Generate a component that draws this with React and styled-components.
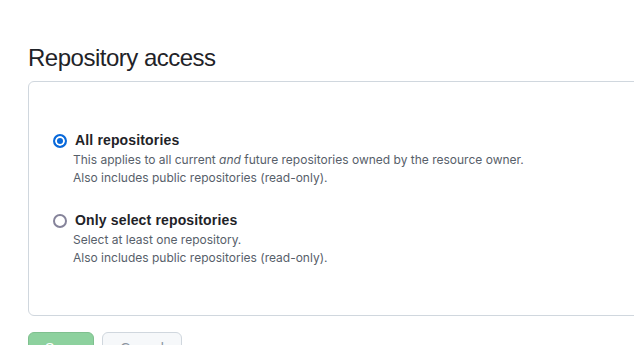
import * as React from 'react';
import styled, { createGlobalStyle } from 'styled-components';

const GlobalStyle = createGlobalStyle`
  html, body {
    margin: 0;
    padding: 0;
    background: #ffffff;
    overflow: hidden;
  }
  body {
    font-family: "Liberation Sans", Arial, sans-serif;
    color: #1f2328;
  }
`;

const Page = styled.div`
  padding: 40px 0 0 28px;
  width: 680px;
`;

const Heading = styled.h2`
  margin: 0 0 5px;
  font-size: 24px;
  font-weight: 400;
  line-height: 36px;
  letter-spacing: -0.5px;
  color: #1f2328;
`;

const Box = styled.div`
  border: 1px solid #d0d7de;
  border-radius: 6px;
  padding: 48px 24px 48px;
  display: flex;
  flex-direction: column;
  gap: 23px;
`;

const Option = styled.div`
  display: flex;
  flex-direction: column;
`;

const OptionLabel = styled.label`
  display: flex;
  align-items: center;
  gap: 8px;
  font-size: 14px;
  font-weight: 700;
  line-height: 21px;
  letter-spacing: 0.15px;
  color: #1f2328;
  cursor: pointer;
`;

const Radio = styled.span`
  box-sizing: border-box;
  width: 14px;
  height: 14px;
  border-radius: 50%;
  flex-shrink: 0;
  border: 2px solid ${props => (props.checked ? '#0969da' : '#85839a')};
  background: ${props => (props.checked ? '#0969da' : '#ffffff')};
  box-shadow: ${props => (props.checked ? 'inset 0 0 0 2px #ffffff' : 'none')};
`;

const Note = styled.p`
  margin: 0 0 0 20px;
  font-family: Inter, "Liberation Sans", sans-serif;
  font-size: 12px;
  line-height: 18px;
  color: #57606a;
`;

const Actions = styled.div`
  display: flex;
  gap: 8px;
  margin-top: 16px;
`;

const Button = styled.button`
  box-sizing: border-box;
  height: 32px;
  padding: 0 16px;
  border-radius: 6px;
  font-family: inherit;
  font-size: 14px;
  font-weight: 500;
  line-height: 20px;
  border: 1px solid ${props => (props.primary ? '#7fc08f' : '#d0d7de')};
  background: ${props => (props.primary ? '#8dd19e' : '#f6f8fa')};
  color: ${props => (props.primary ? '#ffffff' : '#8c959f')};
  width: ${props => props.w}px;
`;

const options = [
  {
    id: 'all',
    label: 'All repositories',
    checked: true,
    notes: [
      <>This applies to all current <em>and</em> future repositories owned by the resource owner.</>,
      'Also includes public repositories (read-only).',
    ],
  },
  {
    id: 'select',
    label: 'Only select repositories',
    checked: false,
    notes: ['Select at least one repository.', 'Also includes public repositories (read-only).'],
  },
];

export default function App() {
  return (
    <Page>
      <GlobalStyle />
      <Heading>Repository access</Heading>
      <Box>
        {options.map(opt => (
          <Option key={opt.id}>
            <OptionLabel>
              <Radio checked={opt.checked} />
              {opt.label}
            </OptionLabel>
            {opt.notes.map((n, i) => (
              <Note key={i}>{n}</Note>
            ))}
          </Option>
        ))}
      </Box>
      <Actions>
        <Button primary w={66}>Save</Button>
        <Button w={80}>Cancel</Button>
      </Actions>
    </Page>
  );
}
